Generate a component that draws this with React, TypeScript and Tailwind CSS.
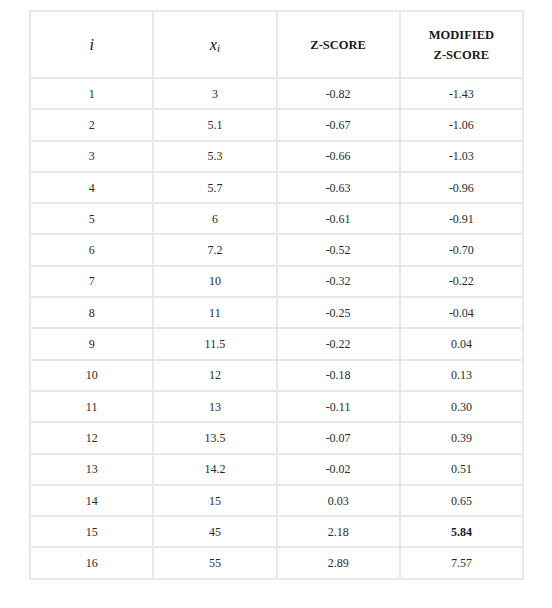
import React from "react";

const rows = [
  [1, "3", "-0.82", "-1.43"],
  [2, "5.1", "-0.67", "-1.06"],
  [3, "5.3", "-0.66", "-1.03"],
  [4, "5.7", "-0.63", "-0.96"],
  [5, "6", "-0.61", "-0.91"],
  [6, "7.2", "-0.52", "-0.70"],
  [7, "10", "-0.32", "-0.22"],
  [8, "11", "-0.25", "-0.04"],
  [9, "11.5", "-0.22", "0.04"],
  [10, "12", "-0.18", "0.13"],
  [11, "13", "-0.11", "0.30"],
  [12, "13.5", "-0.07", "0.39"],
  [13, "14.2", "-0.02", "0.51"],
  [14, "15", "0.03", "0.65"],
  [15, "45", "2.18", "5.84"],
  [16, "55", "2.89", "7.57"],
];

const cell = "border border-[#e8e8e8] text-center align-middle p-0";

const App = () => {
  return (
    <div className="w-[552px] h-[608px] bg-white pt-[10px] pl-[29px]" style={{ fontFamily: '"Liberation Serif", serif' }}>
      <table className="w-[495px] border border-[#e8e8e8] border-separate border-spacing-0 table-fixed">
        <thead>
          <tr>
            <th className={`${cell} h-[67px] font-normal`}>
              <span className="italic text-[16px] text-[#111]">i</span>
            </th>
            <th className={`${cell} h-[67px] font-normal`}>
              <span className="italic text-[16px] text-[#111]">
                x<sub className="text-[11px]">i</sub>
              </span>
            </th>
            <th className={`${cell} h-[67px] font-bold text-[12.5px] text-[#1a1a1a] leading-[20px]`}>Z-SCORE</th>
            <th className={`${cell} h-[67px] font-bold text-[12.5px] text-[#1a1a1a] leading-[20px]`}>
              MODIFIED
              <br />
              Z-SCORE
            </th>
          </tr>
        </thead>
        <tbody>
          {rows.map((r) => (
            <tr key={r[0]}>
              <td className={`${cell} h-[31.3px] text-[12px] text-[#2a2a2a]`}>{r[0]}</td>
              <td className={`${cell} h-[31.3px] text-[12px] text-[#2a2a2a]`}>{r[1]}</td>
              <td className={`${cell} h-[31.3px] text-[12px] text-[#2a2a2a]`}>{r[2]}</td>
              <td className={`${cell} h-[31.3px] text-[12px] ${r[0] === 15 ? "font-bold text-[#1a1a1a]" : "text-[#2a2a2a]"}`}>
                {r[3]}
              </td>
            </tr>
          ))}
        </tbody>
      </table>
    </div>
  );
};

export default App;
